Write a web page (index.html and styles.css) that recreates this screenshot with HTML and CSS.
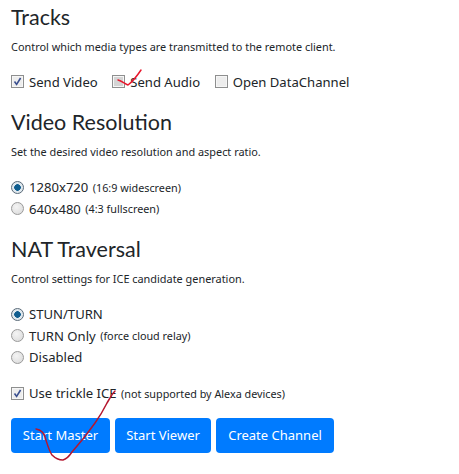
FILE: index.html
```html
<!DOCTYPE html>
<html lang="en">

<head>
    <meta charset="UTF-8">
    <title>Tracks</title>
    <link rel="stylesheet" href="styles.css">
</head>

<body>
    <div class="main">
        <h4>Tracks</h4>
        <p class="hint">Control which media types are transmitted to the remote client.</p>
        <div class="inline-row">
            <label class="opt"><span class="check on"><svg viewBox="0 0 9 9"><path d="M1.5 4.5 L3.6 7.4 L7.6 1"/></svg></span>Send Video</label>
            <label class="opt"><span class="check mixed"></span>Send Audio</label>
            <label class="opt"><span class="check"></span>Open DataChannel</label>
        </div>

        <h4>Video Resolution</h4>
        <p class="hint">Set the desired video resolution and aspect ratio.</p>
        <div class="stack">
            <label class="opt"><span class="radio on"></span>1280x720 <small>(16:9 widescreen)</small></label>
            <label class="opt"><span class="radio"></span>640x480 <small>(4:3 fullscreen)</small></label>
        </div>

        <h4>NAT Traversal</h4>
        <p class="hint">Control settings for ICE candidate generation.</p>
        <div class="stack">
            <label class="opt"><span class="radio on"></span>STUN/TURN</label>
            <label class="opt"><span class="radio"></span>TURN Only <small>(force cloud relay)</small></label>
            <label class="opt"><span class="radio"></span>Disabled</label>
        </div>

        <div class="trickle">
            <label class="opt"><span class="check on"><svg viewBox="0 0 9 9"><path d="M1.5 4.5 L3.6 7.4 L7.6 1"/></svg></span>Use trickle ICE <small>(not supported by Alexa devices)</small></label>
        </div>

        <div class="buttons">
            <div class="btn">Start Master</div>
            <div class="btn">Start Viewer</div>
            <div class="btn">Create Channel</div>
        </div>
    </div>

    <!-- red pen marks drawn on top of the screenshot -->
    <svg class="marks" viewBox="0 0 459 474">
        <path class="pen-red" d="M118 80 C122 81 125 84 128 85 C132 82 137 76 141 70"/>
        <path class="pen-dark" d="M36 429 C41 430 44 433 45 437 C47 443 49 451 52 455 C55 458 59 460 63 460 C67 459 70 455 72 452 C80 443 88 433 95 423 C100 416 104 409 107 403 C110 398 112 394 115 391"/>
    </svg>
</body>

</html>
```

FILE: styles.css
```css
* {
    box-sizing: border-box;
}

body {
    margin: 0;
    background-color: white;
    color: #212529;
    font-family: "Noto Sans", "Open Sans", sans-serif;
}

.main {
    padding: 2px 11px 0;
}

h4 {
    margin: 0;
    height: 30px;
    line-height: 30px;
    font-family: Lato, "Noto Sans", sans-serif;
    font-size: 21.5px;
    font-weight: 400;
}

.hint {
    margin: 7px 0 0;
    height: 16px;
    line-height: 16px;
    font-size: 10.9px;
}

.inline-row {
    display: flex;
    gap: 14.5px;
    margin-top: 16px;
    margin-bottom: 14px;
}

.stack {
    display: flex;
    flex-direction: column;
    margin-top: 17px;
    margin-bottom: 14px;
}

.opt {
    display: flex;
    align-items: center;
    height: 21.5px;
    font-size: 13.1px;
    white-space: pre;
}

small {
    font-size: 10.8px;
    margin-left: 1px;
}

.check {
    width: 13px;
    height: 13px;
    margin-right: 5px;
    border: 1px solid #8e8f8f;
    background-color: #ededed;
    box-shadow: inset 0 0 0 1px #f6f6f6;
    flex-shrink: 0;
    padding: 1px;
}

.check svg {
    display: block;
    width: 100%;
    height: 100%;
}

.check path {
    fill: none;
    stroke: #3a4f8f;
    stroke-width: 1.6;
}

.check.mixed {
    background-color: #d4d4d4;
}

.radio {
    width: 13px;
    height: 13px;
    margin-right: 5px;
    border-radius: 50%;
    border: 1px solid #9a9a9a;
    background: radial-gradient(circle at 40% 35%, #f4f4f4, #d8d8d8);
    flex-shrink: 0;
}

.radio.on {
    background: radial-gradient(circle, #0f5d8f 0 3px, #dfe8ee 3.6px);
    border-color: #5a6a78;
}

.trickle {
    margin-top: 14.5px;
}

.buttons {
    display: grid;
    grid-template-columns: 99px 96px 118px;
    gap: 5px;
    margin-top: 14px;
}

.btn {
    height: 35px;
    line-height: 35px;
    text-align: center;
    background-color: #007bff;
    color: white;
    font-size: 13px;
    border-radius: 4px;
}

.marks {
    position: absolute;
    left: 0;
    top: 0;
    width: 459px;
    height: 474px;
    pointer-events: none;
}

.marks path {
    fill: none;
    stroke-width: 1.5;
    stroke-linecap: round;
}

.pen-red {
    stroke: #e8172c;
}

.pen-dark {
    stroke: #b5172f;
}
```
